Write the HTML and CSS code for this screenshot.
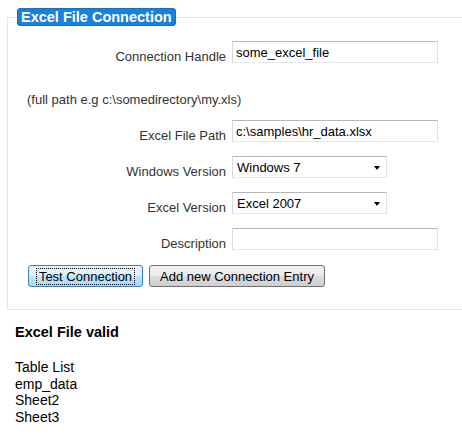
FILE: index.html
```html
<!DOCTYPE html>
<html>
<head>
<meta charset="utf-8">
<link rel="stylesheet" href="styles.css">
</head>
<body>
<div class="page">
  <fieldset class="conn">
    <legend class="conn-title">Excel File Connection</legend>
    <div class="row row-first">
      <label class="lbl">Connection Handle</label>
      <input class="field" type="text" value="some_excel_file">
    </div>
    <div class="hint">(full path e.g c:\somedirectory\my.xls)</div>
    <div class="row row-path">
      <label class="lbl">Excel File Path</label>
      <input class="field" type="text" value="c:\samples\hr_data.xlsx">
    </div>
    <div class="row">
      <label class="lbl">Windows Version</label>
      <div class="select"><span class="select-text">Windows 7</span><span class="arrow"></span></div>
    </div>
    <div class="row">
      <label class="lbl">Excel Version</label>
      <div class="select"><span class="select-text">Excel 2007</span><span class="arrow"></span></div>
    </div>
    <div class="row">
      <label class="lbl">Description</label>
      <input class="field" type="text" value="">
    </div>
    <div class="buttons">
      <button class="btn btn-focus" type="button"><span class="focus-ring">Test Connection</span></button>
      <button class="btn btn-add" type="button">Add new Connection Entry</button>
    </div>
  </fieldset>
  <div class="result">
    <div class="result-title">Excel File valid</div>
    <div class="list">
      <div>Table List</div>
      <div>emp_data</div>
      <div>Sheet2</div>
      <div>Sheet3</div>
    </div>
  </div>
</div>
</body>
</html>
```
FILE: styles.css
```css
html, body {
  margin: 0;
  padding: 0;
  overflow: hidden;
  background: #ffffff;
}
body {
  font-family: "Liberation Sans", Arial, sans-serif;
  font-size: 13px;
  color: #000;
}
.page {
  padding: 8px 0 0 7px;
}
.conn {
  margin: 0;
  padding: 0 0 22px 0;
  border: 1px solid #e6e6e6;
  border-right: none;
  width: 455px;
  min-width: 0;
  box-sizing: border-box;
}
.conn-title {
  margin-left: 9px;
  padding: 0 4px;
  height: 18px;
  line-height: 18px;
  background: #1a80da;
  color: #ffffff;
  font-weight: bold;
  font-size: 14.5px;
  border-radius: 4px;
  box-shadow: inset 0 0 0 1px #156fc2;
}
.row {
  display: flex;
  align-items: center;
  height: 22px;
  margin-top: 14px;
}
.row-first {
  margin-top: 15px;
}
.row-path {
  margin-top: 9px;
}
.lbl {
  flex: 0 0 218px;
  text-align: right;
  margin-right: 6px;
  padding-top: 8px;
  color: #333;
  font-size: 13px;
}
.field {
  box-sizing: border-box;
  width: 206px;
  height: 22px;
  margin: 0;
  padding: 0 3px;
  font-family: "Liberation Sans", Arial, sans-serif;
  font-size: 13px;
  color: #000;
  border: 1px solid;
  border-color: #b5b7bd #dde1e7 #e3e9ef #d6d8de;
  background: #fff;
  outline: none;
}
.hint {
  margin-top: 26px;
  height: 22px;
  line-height: 22px;
  padding-left: 19px;
  color: #333;
}
.select {
  box-sizing: border-box;
  width: 155px;
  height: 22px;
  display: flex;
  align-items: center;
  justify-content: space-between;
  padding: 0 6px 0 4px;
  border: 1px solid;
  border-color: #b5b7bd #dde1e7 #e3e9ef #d6d8de;
  background: #fff;
  color: #000;
}
.arrow {
  width: 0;
  height: 0;
  border-left: 3.5px solid transparent;
  border-right: 3.5px solid transparent;
  border-top: 4px solid #000;
  margin-top: 1px;
}
.buttons {
  display: flex;
  gap: 6px;
  margin-top: 15px;
  margin-left: 20px;
}
.btn {
  box-sizing: border-box;
  height: 22px;
  margin: 0;
  padding: 0;
  font-family: "Liberation Sans", Arial, sans-serif;
  font-size: 13px;
  color: #000;
  border-radius: 3px;
  display: flex;
  align-items: center;
  justify-content: center;
}
.btn-focus {
  width: 115px;
  border: 1px solid #3c7fb1;
  background: linear-gradient(#eaf6fd 0%, #d9f0fc 50%, #bee6fd 50%, #a7d9f5 100%);
}
.focus-ring {
  border: 1px dotted #000;
  padding: 0 2px;
  line-height: 15px;
}
.btn-add {
  width: 176px;
  border: 1px solid #707070;
  background: linear-gradient(#f2f2f2 0%, #ebebeb 50%, #dddddd 50%, #cfcfcf 100%);
}
.result {
  padding-left: 8px;
  margin-top: 14px;
}
.result-title {
  font-weight: bold;
  font-size: 14.5px;
  line-height: 17px;
}
.list {
  margin-top: 18px;
  font-size: 14px;
  line-height: 16.6px;
}
```
